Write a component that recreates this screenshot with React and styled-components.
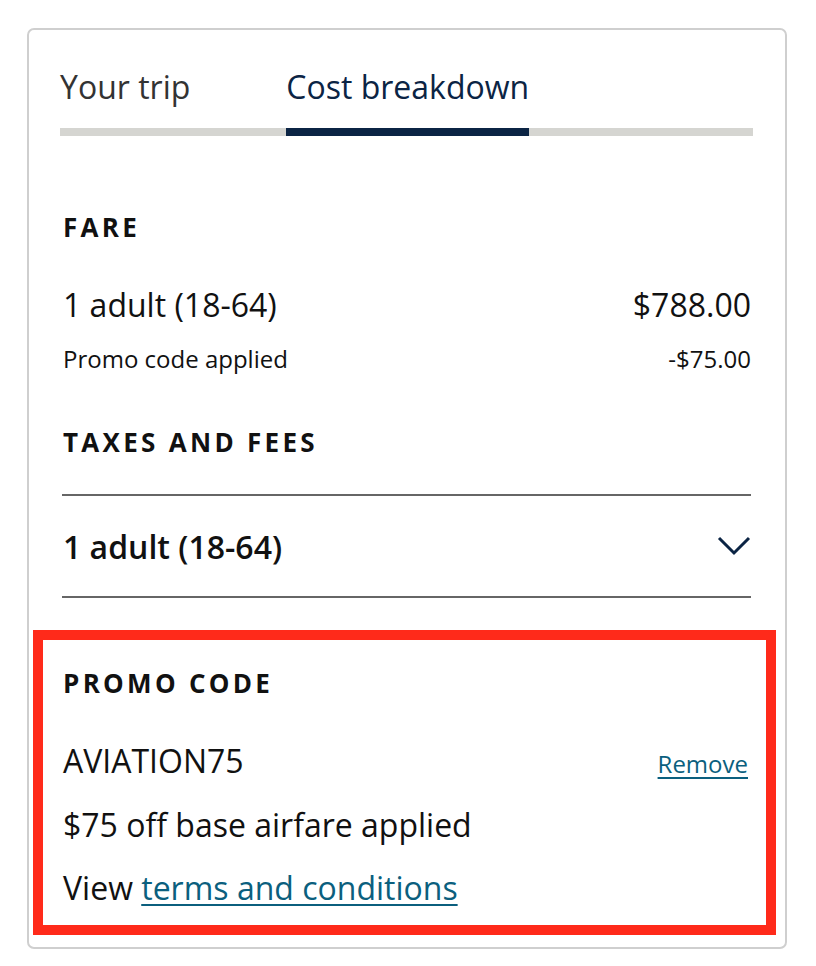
import React from "react";
import styled, { createGlobalStyle } from "styled-components";

const Global = createGlobalStyle`
  html, body { margin: 0; padding: 0; background: #fff; }
  body { font-family: "Open Sans", "Noto Sans", sans-serif; color: #111; }
`;

const Card = styled.div`
  box-sizing: border-box;
  width: 760px;
  height: 921px;
  margin: 28px 0 0 27px;
  border: 2px solid #cfcfcf;
  border-radius: 7px;
  padding: 0 32px 12px 31px;
  display: flex;
  flex-direction: column;
`;

const TabList = styled.div`
  display: flex;
  gap: 96px;
  padding-top: 35px;
  border-bottom: 8px solid #d5d5d1;
`;

const Tab = styled.div`
  font-size: 32px;
  line-height: 44px;
  padding-bottom: 19px;
  margin-bottom: -8px;
  border-bottom: 8px solid ${(p) => (p.$active ? "#0b2444" : "transparent")};
  color: ${(p) => (p.$active ? "#0b2444" : "#333")};
`;

const Section = styled.div`
  padding: 0 2px;
  display: flex;
  flex-direction: column;
`;

const Heading = styled.div`
  font-size: 26px;
  line-height: 35px;
  font-weight: 700;
  letter-spacing: 3.3px;
  color: #111;
  margin-top: ${(p) => p.$mt || 0}px;
  padding-left: ${(p) => p.$pl || 0}px;
`;

const Row = styled.div`
  display: flex;
  justify-content: space-between;
  align-items: baseline;
  margin-top: ${(p) => p.$mt || 0}px;
  padding-left: ${(p) => p.$pl || 0}px;
`;

const BodyText = styled.div`
  font-size: ${(p) => p.$size || 32}px;
  line-height: ${(p) => (p.$size ? Math.round(p.$size * 1.36) : 44)}px;
  color: #111;
  margin-top: ${(p) => p.$mt || 0}px;
`;

const Accordion = styled.div`
  margin-top: 34px;
  border-top: 2px solid #666;
  border-bottom: 2px solid #666;
  height: 100px;
  display: flex;
  align-items: center;
  justify-content: space-between;
  padding: 0 0 0 1px;
`;

const AccordionLabel = styled.div`
  font-size: 32px;
  font-weight: 600;
  color: #111;
`;

const Highlight = styled.div`
  margin: 32px -23px 0 -27px;
  border: 10px solid #ff2a1a;
  padding: 26px 18px 15px 20px;
  flex: 1;
`;

const Link = styled.a`
  color: #0b5f7e;
  text-decoration: underline;
  text-underline-offset: 4px;
  text-decoration-thickness: 2px;
  cursor: pointer;
  font-size: ${(p) => p.$size || 32}px;
`;

const Chevron = () => (
  <svg width="34" height="22" viewBox="0 0 34 22" fill="none">
    <path d="M2 3 L17 18 L32 3" stroke="#0b2444" strokeWidth="3" />
  </svg>
);

export default function App() {
  return (
    <>
      <Global />
      <Card>
        <TabList>
          <Tab>Your trip</Tab>
          <Tab $active>Cost breakdown</Tab>
        </TabList>

        <Section>
          <Heading $mt={74} $pl={1}>FARE</Heading>
          <Row $mt={38} $pl={1}>
            <BodyText>1 adult (18-64)</BodyText>
            <BodyText>$788.00</BodyText>
          </Row>
          <Row $mt={15} $pl={1}>
            <BodyText $size={24}>Promo code applied</BodyText>
            <BodyText $size={24}>-$75.00</BodyText>
          </Row>

          <Heading $mt={50} $pl={1}>TAXES AND FEES</Heading>
          <Accordion>
            <AccordionLabel>1 adult (18-64)</AccordionLabel>
            <Chevron />
          </Accordion>
        </Section>

        <Highlight>
          <Heading>PROMO CODE</Heading>
          <Row $mt={38}>
            <BodyText>AVIATION75</BodyText>
            <Link $size={24}>Remove</Link>
          </Row>
          <BodyText $mt={20}>$75 off base airfare applied</BodyText>
          <BodyText $mt={19}>
            View <Link>terms and conditions</Link>
          </BodyText>
        </Highlight>
      </Card>
    </>
  );
}
